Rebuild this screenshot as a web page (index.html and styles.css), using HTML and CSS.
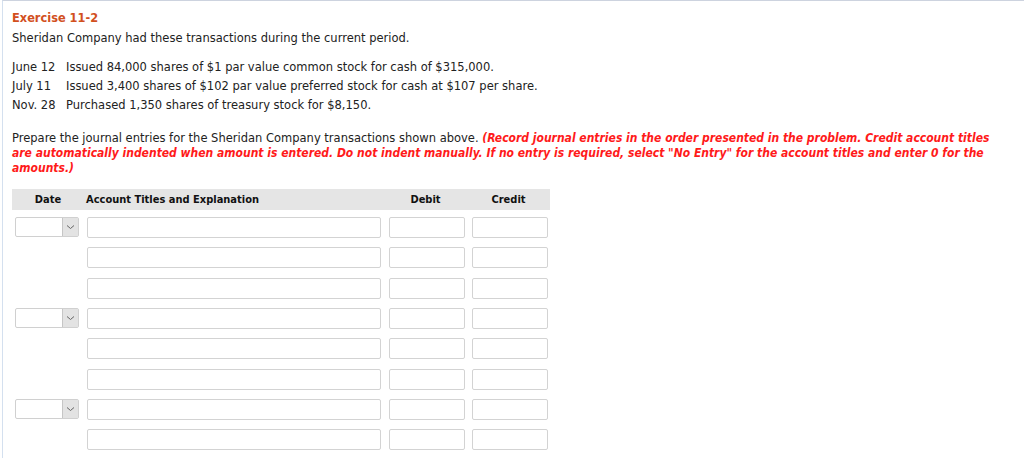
FILE: index.html
```html
<!DOCTYPE html>
<html>
<head>
<meta charset="utf-8">
<link rel="stylesheet" href="styles.css">
</head>
<body>
<div class="frame">
  <h1 class="title">Exercise 11-2</h1>
  <p class="intro">Sheridan Company had these transactions during the current period.</p>
  <table class="trans">
    <tr><td class="tdate">June 12</td><td>Issued 84,000 shares of $1 par value common stock for cash of $315,000.</td></tr>
    <tr><td class="tdate">July 11</td><td>Issued 3,400 shares of $102 par value preferred stock for cash at $107 per share.</td></tr>
    <tr><td class="tdate">Nov. 28</td><td>Purchased 1,350 shares of treasury stock for $8,150.</td></tr>
  </table>
  <p class="prompt">Prepare the journal entries for the Sheridan Company transactions shown above. <em class="note">(Record journal entries in the order presented in the problem. Credit account titles are automatically indented when amount is entered. Do not indent manually. If no entry is required, select "No Entry" for the account titles and enter 0 for the amounts.)</em></p>
  <div class="journal">
    <div class="jhead">
      <div class="hdate">Date</div>
      <div class="hacct">Account Titles and Explanation</div>
      <div class="hamt">Debit</div>
      <div class="hamt">Credit</div>
    </div>
    <div class="jrows">
      <div class="jrow"><div class="cdate"><span class="sel"><span class="arrow"><svg width="9" height="6" viewBox="0 0 9 6"><path d="M1 1.5 L4.5 4.5 L8 1.5" fill="none" stroke="#666" stroke-width="1"/></svg></span></span></div><span class="inp acct"></span><span class="inp amt"></span><span class="inp amt"></span></div>
      <div class="jrow"><div class="cdate"></div><span class="inp acct"></span><span class="inp amt"></span><span class="inp amt"></span></div>
      <div class="jrow"><div class="cdate"></div><span class="inp acct"></span><span class="inp amt"></span><span class="inp amt"></span></div>
      <div class="jrow"><div class="cdate"><span class="sel"><span class="arrow"><svg width="9" height="6" viewBox="0 0 9 6"><path d="M1 1.5 L4.5 4.5 L8 1.5" fill="none" stroke="#666" stroke-width="1"/></svg></span></span></div><span class="inp acct"></span><span class="inp amt"></span><span class="inp amt"></span></div>
      <div class="jrow"><div class="cdate"></div><span class="inp acct"></span><span class="inp amt"></span><span class="inp amt"></span></div>
      <div class="jrow"><div class="cdate"></div><span class="inp acct"></span><span class="inp amt"></span><span class="inp amt"></span></div>
      <div class="jrow"><div class="cdate"><span class="sel"><span class="arrow"><svg width="9" height="6" viewBox="0 0 9 6"><path d="M1 1.5 L4.5 4.5 L8 1.5" fill="none" stroke="#666" stroke-width="1"/></svg></span></span></div><span class="inp acct"></span><span class="inp amt"></span><span class="inp amt"></span></div>
      <div class="jrow"><div class="cdate"></div><span class="inp acct"></span><span class="inp amt"></span><span class="inp amt"></span></div>
    </div>
  </div>
</div>
</body>
</html>
```
FILE: styles.css
```css
html, body {
  margin: 0;
  padding: 0;
  background: #fff;
}
body {
  font-family: "DejaVu Sans", sans-serif;
  font-size: 11.5px;
  color: #222;
}
.frame {
  margin-left: 2px;
  border-top: 1px solid #cdd3df;
  border-left: 1px solid #d4e0ef;
  height: 458px;
  padding: 9px 0 0 9px;
  box-sizing: border-box;
}
.title {
  margin: 0;
  font-size: 11.4px;
  font-weight: bold;
  color: #d2501e;
  line-height: 16px;
}
.intro {
  margin: 4px 0 0;
  line-height: 16px;
}
.trans {
  border-collapse: collapse;
  margin-top: 11px;
}
.trans td {
  padding: 0;
  height: 19px;
  vertical-align: middle;
}
.trans .tdate {
  width: 54px;
}
.prompt {
  margin: 17px 0 0;
  line-height: 15px;
  width: 990px;
}
.note {
  font-family: "DejaVu Sans Condensed", "DejaVu Sans", sans-serif;
  font-size: 12px;
  line-height: 15px;
  color: #ff1a1a;
  font-weight: bold;
  font-style: italic;
}
.journal {
  width: 538px;
  margin-top: 13px;
}
.jhead {
  display: flex;
  align-items: center;
  height: 21px;
  background: #e5e5e5;
  font-family: "DejaVu Sans Condensed", "DejaVu Sans", sans-serif;
  font-size: 11px;
  font-weight: bold;
  color: #111;
}
.hdate {
  width: 72px;
  text-align: center;
}
.hacct {
  flex: 1;
  padding-left: 2px;
}
.hamt {
  width: 83px;
  text-align: center;
}
.jrows {
  padding-top: 7px;
}
.jrow {
  display: flex;
  align-items: flex-start;
  height: 30.33px;
}
.cdate {
  width: 75px;
  padding-left: 3px;
  box-sizing: border-box;
  display: flex;
}
.sel {
  width: 64px;
  height: 20px;
  box-sizing: border-box;
  border: 1px solid #d0d0d0;
  border-radius: 2px;
  background: #fff;
  display: flex;
  justify-content: flex-end;
}
.arrow {
  width: 15px;
  height: 18px;
  background: #e3e3e3;
  border-left: 1px solid #c6c6c6;
  display: flex;
  align-items: center;
  justify-content: center;
}
.inp {
  height: 21px;
  box-sizing: border-box;
  border: 1px solid #d3d3d3;
  border-radius: 2px;
  background: #fff;
  display: block;
}
.acct {
  width: 294px;
}
.amt {
  width: 76px;
  margin-left: 7px;
}
.acct + .amt {
  margin-left: 8px;
}
```
